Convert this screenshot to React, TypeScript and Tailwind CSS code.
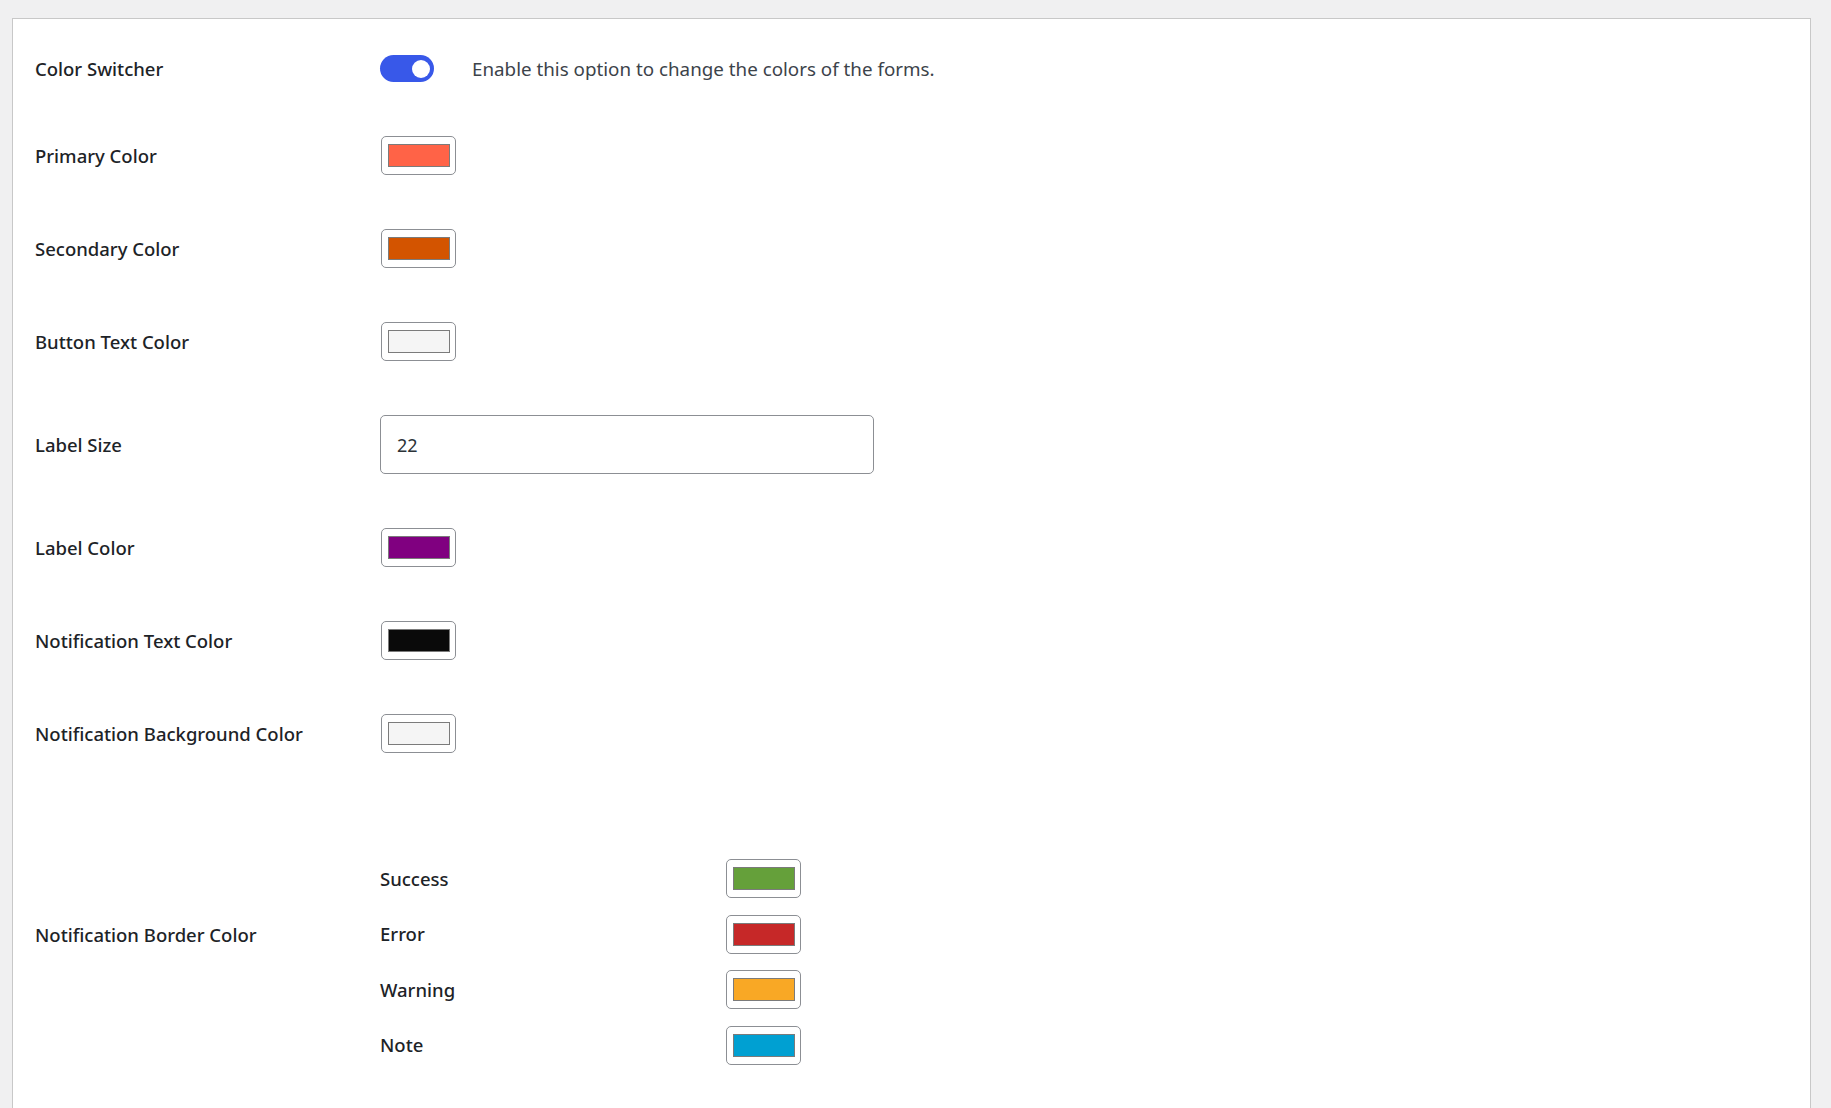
import React from 'react'

type Swatch = { label: string; color: string }

const rows: Swatch[] = [
  { label: 'Primary Color', color: '#ff6347' },
  { label: 'Secondary Color', color: '#d35400' },
  { label: 'Button Text Color', color: '#f5f5f5' },
]

const rowsAfter: Swatch[] = [
  { label: 'Notification Text Color', color: '#0a0a0a' },
  { label: 'Notification Background Color', color: '#f5f5f5' },
]

const borderColors: Swatch[] = [
  { label: 'Success', color: '#65a03a' },
  { label: 'Error', color: '#c62828' },
  { label: 'Warning', color: '#f9a825' },
  { label: 'Note', color: '#00a0d2' },
]

function ColorButton({ color }: { color: string }) {
  return (
    <button
      type="button"
      className="ml-[1px] flex h-[39px] w-[75px] items-center justify-center rounded-[5px] border border-[#8c8f94] bg-white"
    >
      <span className="block h-[23px] w-[62px] border border-[#7b7b7b]" style={{ background: color }} />
    </button>
  )
}

function Label({ children }: { children: React.ReactNode }) {
  return (
    <div className="w-[345px] shrink-0 text-[18.5px] font-medium leading-[24px] text-[#1d2327]">
      {children}
    </div>
  )
}

export default function App() {
  return (
    <div className="flex min-h-screen flex-col bg-[#f0f0f1] pl-[12px] pr-[20px] pt-[18px] font-['Segoe_UI','Noto_Sans',sans-serif]">
      <div className="flex-1 border border-b-0 border-[#c8c8c8] bg-white px-[22px] pt-[9px] pb-[40px]">
        {/* color switcher */}
        <div className="flex items-center py-[27px]">
          <Label>Color Switcher</Label>
          <div className="flex items-center">
            <button
              type="button"
              aria-pressed="true"
              className="flex h-[27px] w-[54px] items-center justify-end rounded-full bg-[#3858e9] pr-[4px]"
            >
              <span className="block h-[18px] w-[18px] rounded-full bg-white" />
            </button>
            <span className="ml-[38px] text-[18.8px] leading-[24px] text-[#3c434a]">
              Enable this option to change the colors of the forms.
            </span>
          </div>
        </div>

        {rows.map((r) => (
          <div key={r.label} className="flex items-center py-[27px]">
            <Label>{r.label}</Label>
            <ColorButton color={r.color} />
          </div>
        ))}

        <div className="flex items-center py-[27px]">
          <Label>Label Size</Label>
          <input
            type="text"
            defaultValue="22"
            className="h-[59px] w-[494px] rounded-[5px] border border-[#8c8f94] bg-white px-[16px] text-[18px] text-[#2c3338] outline-none"
          />
        </div>

        <div className="flex items-center py-[27px]">
          <Label>Label Color</Label>
          <ColorButton color="#800080" />
        </div>

        {rowsAfter.map((r) => (
          <div key={r.label} className="flex items-center py-[27px]">
            <Label>{r.label}</Label>
            <ColorButton color={r.color} />
          </div>
        ))}

        {/* border colours */}
        <div className="flex items-center pt-[27px] pb-[10px]">
          <div className="pb-[11px]">
            <Label>Notification Border Color</Label>
          </div>
          <div className="pt-[44px]">
            {borderColors.map((b) => (
              <div key={b.label} className="flex h-[55.5px] items-center">
                <div className="w-[345px] text-[18.5px] font-medium leading-[24px] text-[#1d2327]">{b.label}</div>
                <ColorButton color={b.color} />
              </div>
            ))}
          </div>
        </div>
      </div>
    </div>
  )
}
